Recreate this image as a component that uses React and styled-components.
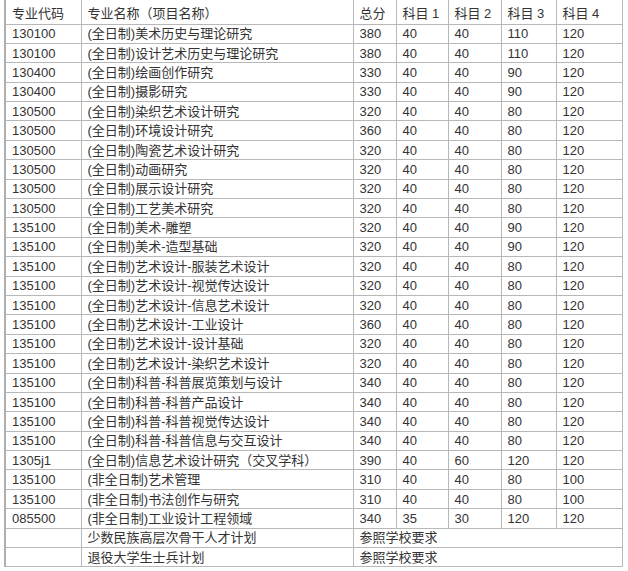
import React from "react";
import styled, { createGlobalStyle } from "styled-components";

const GlobalStyle = createGlobalStyle`
  html, body {
    margin: 0;
    padding: 0;
    background: #fff;
  }
`;

const Page = styled.div`
  padding-left: 4px;
`;

const Table = styled.table`
  border-collapse: collapse;
  table-layout: fixed;
  width: 617px;
  font-family: "Liberation Sans", "Noto Sans CJK SC", sans-serif;
  font-size: 13px;
  color: #333;
`;

const HeadRow = styled.tr`
  height: 24px;
`;

const Row = styled.tr`
  height: 19.4px;
`;

const Cell = styled.td`
  border: 1px solid #b8b8b8;
  border-top: ${(p) => (p.$head ? "none" : "1px solid #b8b8b8")};
  border-left: ${(p) => (p.$first ? "2px solid #b0b0b0" : "1px solid #b8b8b8")};
  padding: 0 0 0 6px;
  line-height: 17px;
  white-space: nowrap;
  overflow: hidden;
  vertical-align: ${(p) => (p.$head ? "bottom" : "middle")};
  padding-bottom: ${(p) => (p.$head ? "2px" : "0")};
`;

const widths = [76, 272, 43, 52, 53, 55, 66];
const headers = ["专业代码", "专业名称（项目名称）", "总分", "科目 1", "科目 2", "科目 3", "科目 4"];

const rows = [
  ["130100", "(全日制)美术历史与理论研究", 380, 40, 40, 110, 120],
  ["130100", "(全日制)设计艺术历史与理论研究", 380, 40, 40, 110, 120],
  ["130400", "(全日制)绘画创作研究", 330, 40, 40, 90, 120],
  ["130400", "(全日制)摄影研究", 330, 40, 40, 90, 120],
  ["130500", "(全日制)染织艺术设计研究", 320, 40, 40, 80, 120],
  ["130500", "(全日制)环境设计研究", 360, 40, 40, 80, 120],
  ["130500", "(全日制)陶瓷艺术设计研究", 320, 40, 40, 80, 120],
  ["130500", "(全日制)动画研究", 320, 40, 40, 80, 120],
  ["130500", "(全日制)展示设计研究", 320, 40, 40, 80, 120],
  ["130500", "(全日制)工艺美术研究", 320, 40, 40, 80, 120],
  ["135100", "(全日制)美术-雕塑", 320, 40, 40, 90, 120],
  ["135100", "(全日制)美术-造型基础", 320, 40, 40, 90, 120],
  ["135100", "(全日制)艺术设计-服装艺术设计", 320, 40, 40, 80, 120],
  ["135100", "(全日制)艺术设计-视觉传达设计", 320, 40, 40, 80, 120],
  ["135100", "(全日制)艺术设计-信息艺术设计", 320, 40, 40, 80, 120],
  ["135100", "(全日制)艺术设计-工业设计", 360, 40, 40, 80, 120],
  ["135100", "(全日制)艺术设计-设计基础", 320, 40, 40, 80, 120],
  ["135100", "(全日制)艺术设计-染织艺术设计", 320, 40, 40, 80, 120],
  ["135100", "(全日制)科普-科普展览策划与设计", 340, 40, 40, 80, 120],
  ["135100", "(全日制)科普-科普产品设计", 340, 40, 40, 80, 120],
  ["135100", "(全日制)科普-科普视觉传达设计", 340, 40, 40, 80, 120],
  ["135100", "(全日制)科普-科普信息与交互设计", 340, 40, 40, 80, 120],
  ["1305j1", "(全日制)信息艺术设计研究（交叉学科）", 390, 40, 60, 120, 120],
  ["135100", "(非全日制)艺术管理", 310, 40, 40, 80, 100],
  ["135100", "(非全日制)书法创作与研究", 310, 40, 40, 80, 100],
  ["085500", "(非全日制)工业设计工程领域", 340, 35, 30, 120, 120],
];

const specials = ["少数民族高层次骨干人才计划", "退役大学生士兵计划"];

export default function App() {
  return (
    <Page>
      <GlobalStyle />
      <Table>
        <colgroup>
          {widths.map((w, i) => (
            <col key={i} style={{ width: w }} />
          ))}
        </colgroup>
        <tbody>
          <HeadRow>
            {headers.map((h, i) => (
              <Cell key={i} $head $first={i === 0}>
                {h}
              </Cell>
            ))}
          </HeadRow>
          {rows.map((r, ri) => (
            <Row key={ri}>
              {r.map((v, ci) => (
                <Cell key={ci} $first={ci === 0}>
                  {v}
                </Cell>
              ))}
            </Row>
          ))}
          {specials.map((s, si) => (
            <Row key={"s" + si}>
              <Cell $first />
              <Cell>{s}</Cell>
              <Cell colSpan={5}>参照学校要求</Cell>
            </Row>
          ))}
        </tbody>
      </Table>
    </Page>
  );
}
